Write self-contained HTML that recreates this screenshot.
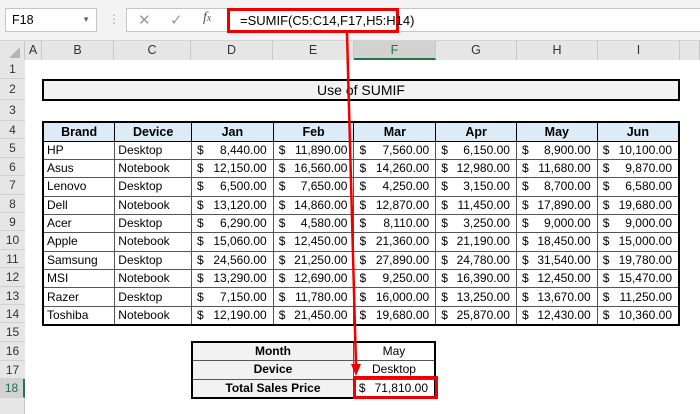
<!DOCTYPE html>
<html><head><meta charset="utf-8"><style>
*{margin:0;padding:0;box-sizing:border-box}
body{width:700px;height:414px;overflow:hidden;background:#fff;font-family:"Liberation Sans",sans-serif;position:relative;font-size:12px;color:#000}
.a{position:absolute}
.ch{position:absolute;top:41px;height:19px;background:#e6e6e6;border-right:1px solid #c8c8c8;text-align:center;line-height:19px;color:#333;font-size:12.5px}
.rh{position:absolute;left:0;width:25px;background:#e6e6e6;border-bottom:1px solid #d0d0d0;text-align:center;color:#333;font-size:12px}
table{border-collapse:collapse;position:absolute}
td{border:1px solid #555;height:18.36px;padding:0 3px;white-space:nowrap;font-size:12px;line-height:17px}
td.m span{float:left}td.m{text-align:right;padding:0 6px 0 5px}
th{background:#ddebf7;border:1px solid #000;font-weight:bold;height:19px;font-size:12.5px}
</style></head><body>
<div class="a" style="left:0;top:0;width:700px;height:41px;background:#f3f3f3;border-bottom:1px solid #d4d4d4"></div>
<div class="a" style="left:5px;top:8px;width:92px;height:24px;background:#fff;border:1px solid #c6c6c6;font-size:12.5px;line-height:22px;padding-left:6px">F18<span style="position:absolute;right:6px;top:0;font-size:8px;color:#666">▼</span></div>
<div class="a" style="left:108px;top:12px;color:#aaa;font-size:12px">⋮</div>
<div class="a" style="left:126px;top:8px;width:580px;height:24px;background:#fff;border:1px solid #c6c6c6"></div>
<div class="a" style="left:138px;top:11px;color:#999;font-size:15px">✕</div>
<div class="a" style="left:170px;top:11px;color:#999;font-size:15px">✓</div>
<div class="a" style="left:203px;top:10px;color:#555;font-style:italic;font-family:'Liberation Serif',serif;font-size:14px">f<span style="font-size:10px">x</span></div>
<div class="a" style="left:227px;top:8px;width:172px;height:25px;border:3px solid #e00;background:#fff;line-height:19px;padding-left:10px;font-size:13px">=SUMIF(C5:C14,F17,H5:H14)</div>
<div class="a" style="left:0;top:41px;width:25px;height:19px;background:#e6e6e6;border-right:1px solid #c8c8c8"></div>
<div class="a" style="left:9px;top:47px;width:0;height:0;border-left:11px solid transparent;border-bottom:11px solid #b5b5b5"></div>
<div class="ch" style="left:25px;width:17px">A</div>
<div class="ch" style="left:42px;width:72px">B</div>
<div class="ch" style="left:114px;width:77px">C</div>
<div class="ch" style="left:191px;width:82px">D</div>
<div class="ch" style="left:273px;width:81px">E</div>
<div class="ch" style="left:354px;width:82px;background:#d2d2d2;border-bottom:2px solid #217346;color:#217346">F</div>
<div class="ch" style="left:436px;width:81px">G</div>
<div class="ch" style="left:517px;width:81px">H</div>
<div class="ch" style="left:598px;width:82px">I</div>
<div class="ch" style="left:680px;width:20px"></div>
<div class="a" style="left:0;top:60px;width:25px;height:354px;background:#e6e6e6;border-right:1px solid #c8c8c8"></div>
<div class="rh" style="top:60px;height:19px;line-height:19px">1</div>
<div class="rh" style="top:79px;height:21px;line-height:21px">2</div>
<div class="rh" style="top:100px;height:21px;line-height:21px">3</div>
<div class="rh" style="top:121px;height:18.4px;line-height:18px">4</div>
<div class="rh" style="top:139.4px;height:18.4px;line-height:18px">5</div>
<div class="rh" style="top:157.8px;height:18.4px;line-height:18px">6</div>
<div class="rh" style="top:176.2px;height:18.4px;line-height:18px">7</div>
<div class="rh" style="top:194.6px;height:18.4px;line-height:18px">8</div>
<div class="rh" style="top:213px;height:18.4px;line-height:18px">9</div>
<div class="rh" style="top:231.4px;height:18.4px;line-height:18px">10</div>
<div class="rh" style="top:249.8px;height:18.4px;line-height:18px">11</div>
<div class="rh" style="top:268.2px;height:18.4px;line-height:18px">12</div>
<div class="rh" style="top:286.6px;height:18.4px;line-height:18px">13</div>
<div class="rh" style="top:305px;height:18px;line-height:18px">14</div>
<div class="rh" style="top:323px;height:18.75px;line-height:18px">15</div>
<div class="rh" style="top:341.75px;height:18.75px;line-height:18px">16</div>
<div class="rh" style="top:360.5px;height:18.75px;line-height:18px">17</div>
<div class="rh" style="top:379.25px;height:18.75px;line-height:18px;background:#d2d2d2;border-right:2px solid #217346;color:#217346">18</div>

<div class="a" style="left:42px;top:79px;width:638px;height:22px;border:2px solid #000;background:#f2f2f2;text-align:center;line-height:18px;font-size:14px">Use of SUMIF</div>

<table style="left:42px;top:121px;width:638px;border:2px solid #000">
<colgroup><col style="width:72px"><col style="width:77px"><col style="width:82px"><col style="width:81px"><col style="width:82px"><col style="width:81px"><col style="width:81px"><col style="width:82px"></colgroup>
<tr><th>Brand</th><th>Device</th><th>Jan</th><th>Feb</th><th>Mar</th><th>Apr</th><th>May</th><th>Jun</th></tr>
<tr><td>HP</td><td>Desktop</td><td class="m"><span>$</span>8,440.00</td><td class="m"><span>$</span>11,890.00</td><td class="m"><span>$</span>7,560.00</td><td class="m"><span>$</span>6,150.00</td><td class="m"><span>$</span>8,900.00</td><td class="m"><span>$</span>10,100.00</td></tr>
<tr><td>Asus</td><td>Notebook</td><td class="m"><span>$</span>12,150.00</td><td class="m"><span>$</span>16,560.00</td><td class="m"><span>$</span>14,260.00</td><td class="m"><span>$</span>12,980.00</td><td class="m"><span>$</span>11,680.00</td><td class="m"><span>$</span>9,870.00</td></tr>
<tr><td>Lenovo</td><td>Desktop</td><td class="m"><span>$</span>6,500.00</td><td class="m"><span>$</span>7,650.00</td><td class="m"><span>$</span>4,250.00</td><td class="m"><span>$</span>3,150.00</td><td class="m"><span>$</span>8,700.00</td><td class="m"><span>$</span>6,580.00</td></tr>
<tr><td>Dell</td><td>Notebook</td><td class="m"><span>$</span>13,120.00</td><td class="m"><span>$</span>14,860.00</td><td class="m"><span>$</span>12,870.00</td><td class="m"><span>$</span>11,450.00</td><td class="m"><span>$</span>17,890.00</td><td class="m"><span>$</span>19,680.00</td></tr>
<tr><td>Acer</td><td>Desktop</td><td class="m"><span>$</span>6,290.00</td><td class="m"><span>$</span>4,580.00</td><td class="m"><span>$</span>8,110.00</td><td class="m"><span>$</span>3,250.00</td><td class="m"><span>$</span>9,000.00</td><td class="m"><span>$</span>9,000.00</td></tr>
<tr><td>Apple</td><td>Notebook</td><td class="m"><span>$</span>15,060.00</td><td class="m"><span>$</span>12,450.00</td><td class="m"><span>$</span>21,360.00</td><td class="m"><span>$</span>21,190.00</td><td class="m"><span>$</span>18,450.00</td><td class="m"><span>$</span>15,000.00</td></tr>
<tr><td>Samsung</td><td>Desktop</td><td class="m"><span>$</span>24,560.00</td><td class="m"><span>$</span>21,250.00</td><td class="m"><span>$</span>27,890.00</td><td class="m"><span>$</span>24,780.00</td><td class="m"><span>$</span>31,540.00</td><td class="m"><span>$</span>19,780.00</td></tr>
<tr><td>MSI</td><td>Notebook</td><td class="m"><span>$</span>13,290.00</td><td class="m"><span>$</span>12,690.00</td><td class="m"><span>$</span>9,250.00</td><td class="m"><span>$</span>16,390.00</td><td class="m"><span>$</span>12,450.00</td><td class="m"><span>$</span>15,470.00</td></tr>
<tr><td>Razer</td><td>Desktop</td><td class="m"><span>$</span>7,150.00</td><td class="m"><span>$</span>11,780.00</td><td class="m"><span>$</span>16,000.00</td><td class="m"><span>$</span>13,250.00</td><td class="m"><span>$</span>13,670.00</td><td class="m"><span>$</span>11,250.00</td></tr>
<tr><td>Toshiba</td><td>Notebook</td><td class="m"><span>$</span>12,190.00</td><td class="m"><span>$</span>21,450.00</td><td class="m"><span>$</span>19,680.00</td><td class="m"><span>$</span>25,870.00</td><td class="m"><span>$</span>12,430.00</td><td class="m"><span>$</span>10,360.00</td></tr>
</table>

<table style="left:191px;top:341px;width:245px;border:2px solid #000">
<colgroup><col style="width:163px"><col style="width:82px"></colgroup>
<tr><td style="background:#f2f2f2;font-weight:bold;text-align:center;height:18.5px">Month</td><td style="text-align:center">May</td></tr>
<tr><td style="background:#f2f2f2;font-weight:bold;text-align:center;height:18.5px">Device</td><td style="text-align:center">Desktop</td></tr>
<tr><td style="background:#f2f2f2;font-weight:bold;text-align:center;height:18.5px">Total Sales Price</td><td class="m"><span>$</span>71,810.00</td></tr>
</table>
<div class="a" style="left:353px;top:376px;width:85px;height:23px;border:3px solid #e00"></div>
<svg class="a" style="left:0;top:0" width="700" height="414"><line x1="347" y1="33" x2="356" y2="366" stroke="#e00" stroke-width="2.5"/><polygon points="351,364 361,364 356,376" fill="#e00"/></svg>
</body></html>
